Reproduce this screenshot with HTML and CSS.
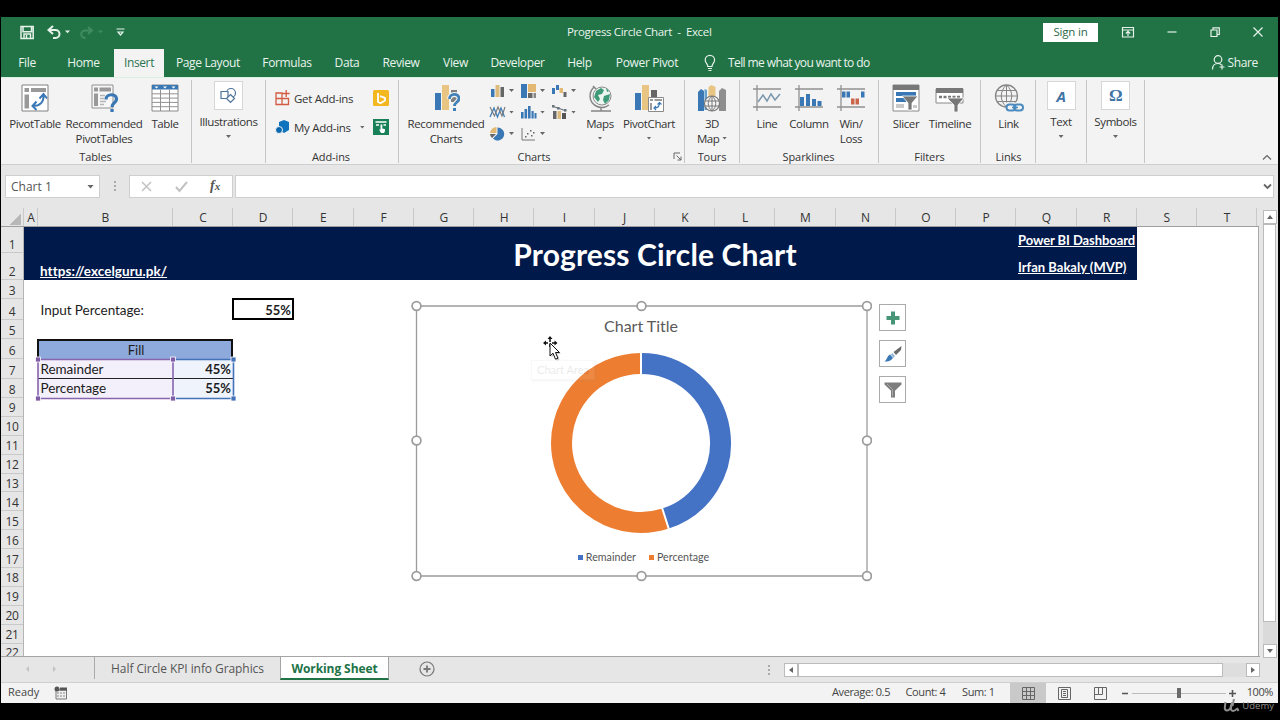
FILE: index.html
```html
<!DOCTYPE html>
<html lang="en">
<head>
<meta charset="utf-8">
<title>Progress Circle Chart - Excel</title>
<link rel="stylesheet" href="styles.css">
</head>
<body>
<div class="app">
  <header class="titlebar">
    <div class="quick">
      <svg width="110" height="20" viewBox="0 0 110 20" fill="none" stroke="#e6f2ea" stroke-width="1.500">
        <path d="M2 4.500h12.200v12H2z M4 4.500v5.200h8.500v-5.200 M5 16v-4h6.500v4 M7.500 13v3"/>
        <path d="M34 4l-4.500 4 4.500 4M30 8h6.500a4 4 0 0 1 0 8h-2.500" stroke-width="2"/>
        <path d="M46 8.500h5l-2.500 2.800z" fill="#e6f2ea" stroke="none"/>
        <path d="M69 5l4 3.500-4 3.500M73 8.500h-6.500a4 3.500 0 0 0 0 7.500" stroke="#3f8c60" stroke-width="2"/>
        <path d="M79 8.500h5l-2.500 2.800z" fill="#3f8c60" stroke="none"/>
        <path d="M97.500 7h8M99 10l2.500 3 2.500-3z" stroke-width="1.200"/>
      </svg>
    </div>
    <div class="doc-title">Progress Circle Chart&nbsp; -&nbsp; Excel</div>
    <div class="window-tools">
      <span class="signin">Sign in</span>
      <svg width="160" height="20" viewBox="0 0 160 20" fill="none" stroke="#e6f2ea" stroke-width="1.200">
        <path d="M6.500 5.500h11v9.500h-11zM6.500 8h11M12 14V9.500M9.800 11.500L12 9.300l2.200 2.200"/>
        <path d="M51.500 10h9"/>
        <path d="M95 8h6v6.500h-6zM97 8V5.800h6.300v6.700h-2"/>
        <path d="M137.500 5.500l9 9M146.500 5.500l-9 9"/>
      </svg>
    </div>
  </header>

  <nav class="tabs">
    <span class="tab t-file">File</span><span class="tab t-home">Home</span><span class="tab t-insert active">Insert</span><span class="tab t-page">Page Layout</span><span class="tab t-form">Formulas</span><span class="tab t-data">Data</span><span class="tab t-review">Review</span><span class="tab t-view">View</span><span class="tab t-dev">Developer</span><span class="tab t-help">Help</span><span class="tab t-power">Power Pivot</span>
    <svg class="bulb" width="14" height="18" viewBox="0 0 14 18" fill="none" stroke="#e6f2ea" stroke-width="1.200"><path d="M4.800 12.500C4.800 9.800 2.200 9 2.200 6a4.700 4.700 0 0 1 9.400 0c0 3-2.600 3.800-2.600 6.500zM5 14.500h4M5.500 16.500h3"/></svg>
    <span class="tell">Tell me what you want to do</span>
    <span class="share"><svg width="15" height="17" viewBox="0 0 15 17" fill="none" stroke="#e6f2ea" stroke-width="1.200"><circle cx="8" cy="5.500" r="3.800"/><path d="M2.500 15.500c0-4 2-6 5.500-6 1.500 0 2.500.5 3.300 1.200M9.500 13h5M12 10.500v5"/></svg>Share</span>
  </nav>

  <section class="ribbon">
    <div class="group g-tables">
      <div class="tools">
        <div class="btn w62">
          <svg width="28" height="28" viewBox="0 0 28 28"><path d="M1 1h26v26H1z" fill="#fff" stroke="#808080"/><path d="M3.500 4h4.500v4h-4.500zM10 4h15v4H10zM3.500 10.500h4.500v14h-4.500z" fill="#999"/><path d="M12 22c7 0 11-4 10.500-11M18.500 14.500l4-4.500 3.500 4.500M15.500 17.500L11.500 22l4 4" fill="none" stroke="#3a78b5" stroke-width="2"/></svg>
          <span>PivotTable</span></div>
        <div class="btn w76">
          <svg width="28" height="28" viewBox="0 0 28 28"><path d="M2 1h21v23H2z" fill="#f7f7f7" stroke="#909090"/><path d="M4 3.500h4v4H4zM9.500 3.500H21v4H9.500zM4 9.500h4V22H4z" fill="#999"/><path d="M10 11.500h5M10 14.500h4M10 17.500h6M10 20.500h4" stroke="#b5b5b5" stroke-width="1.500"/><path d="M16 15.500c0-6.500 10.500-6 10.500-.5 0 4-4.500 3.500-4.500 8" fill="none" stroke="#3a78b5" stroke-width="3.200"/><path d="M20.400 25h3.300v3h-3.300z" fill="#3a78b5"/></svg>
          <span>Recommended<br>PivotTables</span></div>
        <div class="btn w46">
          <svg width="28" height="28" viewBox="0 0 28 28"><path d="M1 1h26v26H1z" fill="#fff" stroke="#8a8a8a"/><path d="M1 1h26v4.500H1z" fill="#3a78b5"/><path d="M9.500 5.500V27M18.500 5.500V27M1 9.800h26M1 14.100h26M1 18.400h26M1 22.700h26" stroke="#929292"/><path d="M3.500 2.500h4l-2 2zM12 2.500h4l-2 2zM20.500 2.500h4l-2 2z" fill="#fff"/></svg>
          <span>Table</span></div>
      </div>
      <div class="group-name">Tables</div>
    </div>

    <div class="group g-illus">
      <div class="gallery"><i><svg width="20" height="20" viewBox="0 0 20 20" fill="#fff" stroke="#4d7399" stroke-width="1.200"><circle cx="12" cy="7" r="4.500"/><path d="M2 5.500h7v7H2z"/><path d="M11.500 8.500l4 4-4 4-4-4z"/></svg></i><span>Illustrations</span><b class="caret"></b></div>
    </div>

    <div class="group g-addins">
      <div class="addins">
        <div class="row">
          <svg width="16" height="16" viewBox="0 0 16 16" fill="none" stroke="#d25b42" stroke-width="1.300"><path d="M1 3h6v11.500H1zM1 8.500h12.500v6H7M11.200 0v7M7.700 3.500h7"/></svg><span>Get Add-ins</span>
          <svg class="far" width="16" height="16" viewBox="0 0 16 16"><rect width="16" height="16" rx="1.500" fill="#f3b71f"/><path d="M5 3v9l2.500 1.200 4.500-2.700V8L7 6.200" fill="none" stroke="#fff" stroke-width="1.800"/></svg>
        </div>
        <div class="row">
          <svg width="16" height="16" viewBox="0 0 16 16"><path d="M4 3l5-2 5 2v8l-5 3-5-3z" fill="#0f74bd"/><circle cx="4" cy="11" r="3.500" fill="#0968b0" stroke="#f3f3f3"/></svg><span>My Add-ins</span><b class="caret"></b>
          <svg class="far" width="16" height="16" viewBox="0 0 16 16"><rect width="16" height="16" fill="#188158"/><path d="M2.500 3h11M3 6h3M10.500 6H13" fill="none" stroke="#fff" stroke-width="1.300"/><path d="M7.500 5.500h1.800v4l2.700.8v2L11 14H8l-2-3.500 1.500.3z" fill="#fff"/></svg>
        </div>
      </div>
      <div class="group-name">Add-ins</div>
    </div>

    <div class="group g-charts">
      <div class="tools">
        <div class="btn w80">
          <svg width="28" height="28" viewBox="0 0 28 28"><path d="M3 9h6v17H3z" fill="#3a78b5"/><path d="M10 1h7v25h-7z" fill="#e8c583"/><path d="M19 6h6v12h-6z" fill="#7f7f7f"/><path d="M17.500 15c0-6 9.500-6 9.500-.5 0 4-4.500 3.500-4.500 7.500" fill="none" stroke="#f3f3f3" stroke-width="5"/><path d="M17.500 15c0-6 9.500-6 9.500-.5 0 4-4.500 3.500-4.500 7.500" fill="none" stroke="#4180b8" stroke-width="2.800"/><path d="M21 24h3v3h-3z" fill="#4180b8"/></svg>
          <span>Recommended<br>Charts</span></div>
        <div class="minis">
          <div><svg width="17" height="16" viewBox="0 0 17 16"><path d="M2 6h3.500v8H2z" fill="#3a78b5"/><path d="M6.500 2h4v12h-4z" fill="#dcbb7d"/><path d="M11.500 4H15v10h-3.500z" fill="#666"/></svg><b class="caret"></b></div>
          <div><svg width="17" height="16" viewBox="0 0 17 16"><path d="M1 1h6v14H1z" fill="#3a78b5"/><path d="M8 1h8v8H8z" fill="#e3b873"/><path d="M8 10h4.500v5H8z" fill="#666"/><path d="M13.500 10H16v5h-2.500z" fill="#888"/></svg><b class="caret"></b></div>
          <div><svg width="17" height="16" viewBox="0 0 17 16"><path d="M1 5h3v6H1zM5 2h3v5H5z" fill="#3a78b5"/><path d="M8.500 5H12v5H8.500z" fill="#e3b873"/><path d="M12.500 9H15.500v5h-3z" fill="#666"/></svg><b class="caret"></b></div>
          <div><svg width="17" height="16" viewBox="0 0 17 16" fill="none"><path d="M1 13L5 4l3.500 9L12 4l3.500 9" stroke="#4180b8" stroke-width="1.300"/><path d="M1 3l4.500 9L9 3l4 9 3-9" stroke="#777" stroke-width="1.100"/></svg><b class="caret"></b></div>
          <div><svg width="17" height="16" viewBox="0 0 17 16"><path d="M1 8h2.600v6.500H1zM4.500 5h2.600v9.500H4.500zM8 2h2.600v12.500H8zM11.500 7h2.200v7.500h-2.200zM14.500 9h2v5.500h-2z" fill="#3a78b5"/></svg><b class="caret"></b></div>
          <div><svg width="17" height="16" viewBox="0 0 17 16"><path d="M2 7h3.500v8H2z" fill="#666"/><path d="M6.500 7H10v8H6.500z" fill="#dcbb7d"/><path d="M11 9h4v6h-4z" fill="#555"/><path d="M2 2.500l5 1.500 8 3" fill="none" stroke="#68737d" stroke-width="1.200"/><path d="M1 1h2.500v2.500H1zM6 3h2.500v2.500H6zM13 5h2.500v2.500H13z" fill="#68737d"/></svg><b class="caret"></b></div>
          <div><svg width="17" height="16" viewBox="0 0 17 16"><path d="M8.500 8V1.500a6.500 6.500 0 1 1-4.500 11z" fill="#3a78b5"/><path d="M7.500 7H1a6.500 6.500 0 0 1 6.500-6z" fill="#e3b873"/><path d="M7 8L3 12A6 6 0 0 1 1 8z" fill="#666"/></svg><b class="caret"></b></div>
          <div><svg width="17" height="16" viewBox="0 0 17 16"><path d="M2 2v12h13" fill="none" stroke="#777"/><path d="M5 10h1.500v1.500H5zM7 7h1.500v1.500H7zM10 4h1.500v1.500H10zM11 9h1.500v1.500H11zM13 6h1.500v1.500H13z" fill="#666"/></svg><b class="caret"></b></div>
        </div>
        <div class="btn w36">
          <svg width="28" height="28" viewBox="0 0 28 28"><circle cx="16" cy="12" r="9" fill="#eef6f2" stroke="#8a8a8a"/><path d="M10 7l5-3 3 2-2 4-4 1 2 4-2 3-4-5zM18 12l6-2-1 6-4 4-2-4zM20 4l3 3-2 1z" fill="#3f9a78"/><path d="M8 3C2 9 3 18 10 22c4 2 9 2 13-1M15 23v4M5 27h20M7 2l3 3" fill="none" stroke="#858585" stroke-width="1.500"/></svg>
          <span>Maps</span><b class="caret"></b></div>
        <div class="btn w62">
          <svg width="30" height="28" viewBox="0 0 30 28"><path d="M1 9h6v17H1z" fill="#3a78b5"/><path d="M8 1h7v25H8z" fill="#e8c583"/><path d="M17 6h6v8h-6z" fill="#666"/><path d="M14.500 13.500h15v14h-15z" fill="#fff" stroke="#8a8a8a"/><path d="M16 15h3v2h-3zM20.500 15H28v2h-7.500zM16 19h2v7h-2z" fill="#999"/><path d="M20.500 24c4 0 5-2 5-5M23.500 20.500l2-2 2 2M22 22l-2 2 2 2" fill="none" stroke="#3a78b5" stroke-width="1.200"/></svg>
          <span>PivotChart</span><b class="caret"></b></div>
      </div>
      <div class="group-name">Charts</div>
      <svg class="launcher" width="9" height="9" viewBox="0 0 9 9" fill="none" stroke="#666"><path d="M1 7V1h6M3.500 3.500L8 8M8 4.500V8H4.500"/></svg>
    </div>

    <div class="group g-tours">
      <div class="tools">
        <div class="btn w54">
          <svg width="28" height="28" viewBox="0 0 28 28"><path d="M0 8l3-3 3 2v20H0z" fill="#3a78b5"/><path d="M6.500 5l2.500 1v20H6.500z" fill="#62a0d0"/><path d="M10.500 3l3-2 4 2v20h-7z" fill="#e8c583"/><path d="M21 7l3-3 4 2v21h-7z" fill="#8e8e8e"/><circle cx="14" cy="19.500" r="7.500" fill="#f5f5f5" stroke="#777" stroke-width="1.200"/><path d="M7 17h14M7 22h14M14 12v15M14 12c-5 4-5 11 0 15M14 12c5 4 5 11 0 15" fill="none" stroke="#777"/></svg>
          <span>3D<br>Map <b class="caret"></b></span></div>
      </div>
      <div class="group-name">Tours</div>
    </div>

    <div class="group g-spark">
      <div class="tools">
        <div class="btn w40">
          <svg width="28" height="28" viewBox="0 0 28 28" fill="none"><path d="M0 5h28M0 23h28M4 1v26" stroke="#919191" stroke-width="1.300"/><path d="M5 18l5-7 4 6 4-7 4 6 5-6" stroke="#7a97ad" stroke-width="1.500"/></svg>
          <span>Line</span></div>
        <div class="btn w44">
          <svg width="28" height="28" viewBox="0 0 28 28"><path d="M0 5h28M0 23h28M4 1v26" stroke="#919191" stroke-width="1.300"/><path d="M5 13h4v9H5zM11 10h4v12h-4zM17 15h4v7h-4zM22.500 17h4v5h-4z" fill="#3a78b5"/></svg>
          <span>Column</span></div>
        <div class="btn w40">
          <svg width="28" height="28" viewBox="0 0 28 28"><path d="M0 5h28M0 23h28M4 1v26" stroke="#919191" stroke-width="1.300"/><path d="M5 7.500h3.500v6H5zM9.500 7.500H13v6H9.500zM24 7.500h3.500v6H24z" fill="#3a78b5"/><path d="M14 14.500h3.500v6H14zM18.500 14.500H22v6h-3.500z" fill="#cb6448"/></svg>
          <span>Win/<br>Loss</span></div>
      </div>
      <div class="group-name">Sparklines</div>
    </div>

    <div class="group g-filters">
      <div class="tools">
        <div class="btn w36">
          <svg width="28" height="28" viewBox="0 0 28 28"><path d="M1 1h26v26H1z" fill="#fff" stroke="#888"/><path d="M1 1h26v5H1z" fill="#777"/><path d="M4 8h20v4H4zM4 14h10v4H4z" fill="#3a78b5"/><path d="M4 20h8v4H4zM21 21h4v3h-4z" fill="#c9c9c9"/><path d="M10 12h16l-6 7v7h-4v-7z" fill="#777" stroke="#fff" stroke-width=".8"/></svg>
          <span>Slicer</span></div>
        <div class="btn w52">
          <svg width="30" height="28" viewBox="0 0 30 28"><path d="M1 5h27v14H1z" fill="#fff" stroke="#888"/><path d="M1 4h27v5H1z" fill="#777"/><path d="M4 13h21" stroke="#777" stroke-width="2.500" stroke-dasharray="3 1.500"/><path d="M12 14h17l-6 7v7h-4v-7z" fill="#777" stroke="#fff" stroke-width=".8"/></svg>
          <span>Timeline</span></div>
      </div>
      <div class="group-name">Filters</div>
    </div>

    <div class="group g-links">
      <div class="tools">
        <div class="btn w54">
          <svg width="30" height="28" viewBox="0 0 30 28" fill="none"><circle cx="12.500" cy="12" r="11" stroke="#858585" stroke-width="1.300"/><path d="M12.500 1v22M1.500 12h22M3.500 6.500h18M3.500 17.500h18M12.500 1c-7 6-7 16 0 22M12.500 1c7 6 7 16 0 22" stroke="#858585"/><path d="M12 18.500h18v9.500H12z" fill="#f3f3f3"/><rect x="12.500" y="20.500" width="9" height="6" rx="3" stroke="#4b8bbf" stroke-width="2"/><rect x="20" y="20.500" width="9" height="6" rx="3" stroke="#4b8bbf" stroke-width="2"/><path d="M18 23.500h6" stroke="#4b8bbf" stroke-width="1.500"/></svg>
          <span>Link</span></div>
      </div>
      <div class="group-name">Links</div>
    </div>

    <div class="group g-text">
      <div class="gallery"><i class="glyph slant">A</i><span>Text</span><b class="caret"></b></div>
    </div>
    <div class="group g-symbols">
      <div class="gallery"><i class="glyph">Ω</i><span>Symbols</span><b class="caret"></b></div>
    </div>
    <svg class="collapse" width="10" height="7" viewBox="0 0 10 7" fill="none" stroke="#666" stroke-width="1.200"><path d="M1 5.500l4-4 4 4"/></svg>
  </section>

  <section class="formula">
    <div class="namebox">Chart 1<b class="caret"></b></div>
    <div class="dots"></div>
    <div class="fx">
      <svg width="102" height="22" viewBox="0 0 102 22" fill="none" stroke="#c2c2c2" stroke-width="1.500"><path d="M12 6l9 9M21 6l-9 9"/><path d="M46 11l3.500 4L57 6" stroke-width="2"/></svg>
      <em>f<small>x</small></em>
    </div>
    <div class="input"><svg width="9" height="7" viewBox="0 0 9 7" fill="none" stroke="#666" stroke-width="1.800"><path d="M1 1.500L4.500 5 8 1.500"/></svg></div>
  </section>

  <section class="sheet">
    <div class="colheads">
      <span class="corner"></span><span>A</span><span>B</span><span>C</span><span>D</span><span>E</span><span>F</span><span>G</span><span>H</span><span>I</span><span>J</span><span>K</span><span>L</span><span>M</span><span>N</span><span>O</span><span>P</span><span>Q</span><span>R</span><span>S</span><span>T</span>
    </div>
    <div class="rowheads">
      <span>1</span><span>2</span><span>3</span><span>4</span><span>5</span><span>6</span><span>7</span><span>8</span><span>9</span><span>10</span><span>11</span><span>12</span><span>13</span><span>14</span><span>15</span><span>16</span><span>17</span><span>18</span><span>19</span><span>20</span><span>21</span><span>22</span>
    </div>
    <div class="cells">
      <div class="banner">
        <a class="site">https://excelguru.pk/</a>
        <h1>Progress Circle Chart</h1>
        <div class="links"><a class="l1">Power BI Dashboard</a><a class="l2">Irfan Bakaly (MVP)</a></div>
      </div>
      <div class="cell input-label">Input Percentage:</div>
      <div class="cell input-value">55%</div>
      <div class="cell fill-head">Fill</div>
      <div class="cell cat c7">Remainder</div>
      <div class="cell num n7">45%</div>
      <div class="cell cat c8">Percentage</div>
      <div class="cell num n8">55%</div>
      <svg class="ranges" width="204" height="48" viewBox="0 0 204 48"><path d="M4 3v40.500h135V4.500H4" fill="none" stroke="#8764ad" stroke-width="1.600"/><path d="M139 4.500h60.500v39H139" fill="none" stroke="#4472b8" stroke-width="1.600"/><g stroke="#fff" stroke-width=".8"><path d="M1.500 2h5v5h-5zM1.500 41h5v5h-5zM136.500 2h5v5h-5zM136.500 41h5v5h-5z" fill="#7e5ca6"/><path d="M197 2h5v5h-5zM197 41h5v5h-5z" fill="#4472b8"/></g></svg>

      <div class="chart">
        <div class="chart-title">Chart Title</div>
        <svg class="donut" width="182" height="182" viewBox="0 0 182 182" fill="none">
          <path d="M91 11.500A79.500 79.500 0 0 1 115.570 166.610" stroke="#4472c4" stroke-width="21"/>
          <path d="M115.570 166.610A79.500 79.500 0 1 1 91 11.500" stroke="#ed7d31" stroke-width="21"/>
          <path d="M91 0v23M111.700 154.700l7.400 23" stroke="#fff" stroke-width="2"/>
        </svg>
        <div class="legend"><i class="blue"></i><span>Remainder</span><i class="orange"></i><span>Percentage</span></div>
        <svg class="frame" width="462" height="282" viewBox="0 0 462 282" fill="#fff" stroke="#9c9c9c">
          <path d="M6.500 6h450.500v270H6.500z" fill="none" stroke-width="1.300"/>
          <g stroke-width="1.700"><circle cx="6.500" cy="6" r="4.400"/><circle cx="231.500" cy="6" r="4.400"/><circle cx="457" cy="6" r="4.400"/><circle cx="6.500" cy="140.500" r="4.400"/><circle cx="457" cy="140.500" r="4.400"/><circle cx="6.500" cy="276" r="4.400"/><circle cx="231.500" cy="276" r="4.400"/><circle cx="457" cy="276" r="4.400"/></g>
        </svg>
        <div class="hint">Chart Area</div>
        <svg class="pointer" width="22" height="26" viewBox="0 0 22 26"><path d="M8 0l2.500 3h-5zM1 7l3-2.500v5zM15.500 7l-3-2.500v5z" fill="#111"/><path d="M8 2v4M3 7h3M10 7h3M8 8v3" stroke="#111" stroke-width="1.500"/><path d="M9.500 8.500v13l3-2.800 2.500 6 2.500-1-2.500-5.700h4z" fill="#777" opacity=".35"/><path d="M8 7v13l3-2.800 2.500 6 2.500-1-2.500-5.700h4z" fill="#fff" stroke="#111"/></svg>
      </div>
      <div class="chart-buttons">
        <span><svg width="16" height="16" viewBox="0 0 16 16"><path d="M6 1.500h4V6h4.500v4H10v4.500H6V10H1.500V6H6z" fill="#459576"/></svg></span>
        <span><svg width="18" height="18" viewBox="0 0 18 18"><path d="M17.500 1l-8 6 2.500 3 5-5z" fill="#6b6b6b"/><path d="M8.500 8L11 11l-1.500 2-3-3.500z" fill="#9bbcd6"/><path d="M6 9.500l3 3.500c-2 3-5 3.500-8.500 3.500C3 15 3 11 6 9.500z" fill="#3a78b5"/></svg></span>
        <span><svg width="18" height="18" viewBox="0 0 18 18"><path d="M.500 1.500h17v2l-6.500 6.300V16.500H7V9.800L.500 3.500z" fill="#7d7d7d"/><path d="M3 3l5.500 5.500V15" fill="none" stroke="#aaa"/></svg></span>
      </div>
    </div>
    <div class="vscroll">
      <span class="arrow up"></span><span class="thumb"></span><span class="track"></span><span class="arrow down"></span>
    </div>
  </section>

  <section class="sheettabs">
    <span class="nav"><svg width="40" height="10" viewBox="0 0 40 10" fill="#c3c3c3"><path d="M7 2v6L4 5zM31 2v6l3-3z"/></svg></span>
    <span class="stab">Half Circle KPI info Graphics</span>
    <span class="stab on">Working Sheet</span>
    <svg class="plus" width="16" height="16" viewBox="0 0 16 16" fill="none" stroke="#777" stroke-width="1.200"><circle cx="8" cy="8" r="7"/><path d="M8 4.500v7M4.500 8h7" stroke-width="1.800"/></svg>
    <div class="dots"></div>
    <div class="hscroll"><span class="arrow left"></span><span class="bar"></span><span class="rest"></span><span class="arrow right"></span></div>
  </section>

  <footer class="status">
    <span class="ready">Ready</span>
    <svg class="macro" width="14" height="14" viewBox="0 0 14 14"><path d="M2 4h10.500v9H2z" fill="#eee" stroke="#777"/><path d="M6 1.500h7v3H6z" fill="#555"/><circle cx="3" cy="3" r="2.500" fill="#555"/><path d="M4 6v6M7 6v6M10 6v6" stroke="#888" stroke-dasharray="2 1"/></svg>
    <span class="stats"><span class="s1">Average: 0.5</span><span class="s2">Count: 4</span><span class="s3">Sum: 1</span></span>
    <span class="view on"><svg width="13" height="13" viewBox="0 0 13 13" fill="none" stroke="#666"><path d="M.500.500h12v12H.500zM4.500.500v12M8.500.500v12M.500 4.500h12M.500 8.500h12"/></svg></span>
    <span class="view"><svg width="13" height="13" viewBox="0 0 13 13" fill="none" stroke="#666"><path d="M.500.500h12v12H.500zM3.500 2.500h6v8h-6zM5 4.500h3M5 6.500h3M5 8.500h3"/></svg></span>
    <span class="view"><svg width="13" height="13" viewBox="0 0 13 13" fill="none" stroke="#666"><path d="M.500.500h12v12H.500zM4.500.500v7h-4M8.500.500v7h-4"/></svg></span>
    <svg class="zoomer" width="116" height="14" viewBox="0 0 116 14"><path d="M1 7.500h6M108 7.500h7M111.500 4v7" stroke="#555" stroke-width="1.600"/><path d="M11 7.500h94" stroke="#bbb"/><path d="M56 2h4v10h-4z" fill="#6a6a6a"/></svg>
    <span class="pct">100%</span>
  </footer>
</div>
<div class="watermark"><svg width="18" height="16" viewBox="0 0 18 16" fill="none" stroke="#8d8d8d" stroke-width="2"><path d="M2.500 4L1.800 9.500c-.3 4 4.200 4 5.700 0L9 4.500M9 4.500L8 10c-.5 4 4 3.500 6 .5M11 1L9.500 8M14 10l1.500 3"/></svg><span>Udemy</span></div>
</body>
</html>
```
FILE: styles.css
```css
* { box-sizing: border-box; }
body { margin: 0; width: 1280px; height: 720px; background: #000; overflow: hidden; padding: 17px 2px 0 1px; position: relative; font-family: "Open Sans", "Noto Sans", sans-serif; font-size: 12px; color: #333; }
svg { display: block; flex: none; }
.app { display: flex; flex-direction: column; width: 1277px; height: 686px; background: #e6e6e6; }
.caret { display: inline-block; width: 5px; height: 3px; background: #666; clip-path: polygon(0 0, 100% 0, 50% 100%); flex: none; }

.titlebar { height: 32px; background: #217346; color: #e9f4ed; display: grid; grid-template-columns: 566px 1fr auto; align-items: center; font-size: 11.5px; }
.quick { padding: 0 0 2px 18px; }
.doc-title { white-space: nowrap; letter-spacing: -.34px; padding-bottom: 4px; }
.window-tools { display: flex; align-items: center; gap: 18px; padding-right: 2px; }
.signin { width: 55px; height: 19px; line-height: 18px; background: #fff; color: #2d6a49; text-align: center; letter-spacing: -.2px; margin-bottom: 2px; }
.window-tools svg { margin-bottom: 3px; }

.tabs { height: 28px; background: #217346; color: #e9f4ed; display: flex; align-items: stretch; line-height: 28px; letter-spacing: -.36px; font-size: 12px; white-space: nowrap; }
.tab { text-align: center; flex: none; }
.t-file { width: 52px; } .t-home { width: 61px; } .t-insert { width: 50px; } .t-page { width: 88px; } .t-form { width: 70px; } .t-data { width: 50px; } .t-review { width: 58px; } .t-view { width: 51px; } .t-dev { width: 73px; } .t-help { width: 51px; } .t-power { width: 84px; }
.tab.active { background: #f3f3f3; color: #2d7552; }
.bulb { margin: 5px 11px 0 14px; }
.tell { letter-spacing: -.6px; }
.share { margin-left: auto; margin-right: 20px; display: flex; gap: 3px; }
.share svg { margin-top: 5px; }

.ribbon { height: 88px; background: #f3f3f3; border-top: 1px solid #dcefe3; border-bottom: 1px solid #cfcfcf; display: flex; position: relative; font-size: 11.5px; letter-spacing: -.4px; }
.group { height: 83px; margin-top: 2px; border-right: 1px solid #c6c6c6; display: flex; flex-direction: column; justify-content: space-between; flex: none; position: relative; white-space: nowrap; }
.g-tables { width: 191px; padding-left: 3px; } .g-illus { width: 74px; } .g-addins { width: 133px; } .g-charts { width: 286px; padding-left: 7px; } .g-tours { width: 55px; } .g-spark { width: 139px; padding-left: 7px; } .g-filters { width: 102px; padding-left: 9px; } .g-links { width: 55px; padding-left: 1px; } .g-text { width: 51px; } .g-symbols { width: 58px; }
.group-name { text-align: center; font-size: 11px; line-height: 13px; letter-spacing: -.1px; }
.g-tables .group-name { margin-left: -4px; }
.g-spark .group-name { margin-left: -8px; }
.g-addins .group-name { margin-left: -2px; }
.g-charts .group-name { margin-left: -22px; }
.g-filters .group-name { margin-left: -9px; }
.tools { display: flex; padding-top: 4px; }
.btn { display: flex; flex-direction: column; align-items: center; text-align: center; line-height: 15px; height: 62px; }
.btn > svg { height: 28px; }
.btn > span { margin-top: 3.5px; }
.btn > .caret { margin-top: 6px; }
.w36 { width: 36px; } .w40 { width: 40px; } .w44 { width: 44px; } .w46 { width: 46px; } .w52 { width: 52px; } .w54 { width: 54px; } .w62 { width: 62px; } .w76 { width: 76px; } .w80 { width: 80px; }
.btn .caret { vertical-align: 3px; }
.gallery { display: flex; flex-direction: column; align-items: center; padding-top: 1px; line-height: 15px; }
.gallery i { width: 29px; height: 29px; border: 1px solid #d7d7d7; background: #fff; display: grid; place-items: center; margin-bottom: 3.5px; }
.gallery .caret { margin-top: 6.5px; }
.glyph { font: bold 17px "Liberation Serif", serif; color: #4173a5; }
.slant { font: italic bold 15px "Open Sans", sans-serif; }
.addins { padding: 10px 9px 0 9px; display: flex; flex-direction: column; gap: 13px; }
.row { display: flex; align-items: center; height: 16px; letter-spacing: -.28px; }
.row span { margin-left: 3px; }
.row .caret { margin-left: 9px; }
.far { margin-left: auto; }
.minis { display: grid; grid-template-columns: repeat(3, 31px); grid-auto-rows: 21.5px; width: 96px; padding-left: 3px; margin-top: -1.5px; }
.minis div { display: flex; align-items: center; gap: 3px; height: 16px; }
.launcher { position: absolute; right: 2px; bottom: 2px; }
.collapse { margin-left: auto; margin-right: 6px; align-self: flex-end; margin-bottom: 3px; }

.formula { height: 43px; padding: 10px 4px 10px 4px; display: flex; color: #555; background: #e6e6e6; }
.namebox { width: 95px; background: #fff; border: 1px solid #cfcfcf; display: flex; align-items: center; justify-content: space-between; padding: 0 5px 0 5px; font-size: 12px; }
.namebox .caret { width: 7px; height: 4px; }
.dots { width: 2px; height: 11px; align-self: center; background: repeating-linear-gradient(#aaa 0 2px, transparent 2px 4px); }
.formula .dots { margin: 0 13px 0 14px; }
.fx { width: 104px; background: #fff; border: 1px solid #cfcfcf; display: flex; position: relative; }
.fx em { position: absolute; left: 80px; top: -1px; font: italic bold 14px/22px "Liberation Serif", serif; color: #555; }
.fx small { font-size: 11px; }
.input { margin-left: 2px; flex: 1; background: #fff; border: 1px solid #cfcfcf; display: flex; align-items: center; justify-content: flex-end; padding-right: 1px; }

.sheet { height: 448px; display: grid; grid-template-columns: 23px 1235px 1fr; grid-template-rows: 19px 429px; font-size: 12px; }
.colheads { grid-column: 1 / 3; display: grid; grid-template-columns: 23px 14px 135px 60px repeat(17, 60.25px); border-bottom: 1px solid #9e9e9e; line-height: 20px; overflow: hidden; text-align: center; }
.colheads span { border-right: 1px solid #c9c9c9; padding-left: 1px; }
.corner { background: linear-gradient(135deg, transparent 50%, #b8b8b8 50%) 9px 6px / 11px 11px no-repeat; }
.rowheads { grid-column: 1; display: grid; grid-template-rows: 26px 27px 19px 21px 19px 20px 20px 19px repeat(14, 18.9px); height: 429px; overflow: hidden; border-right: 1px solid #b5b5b5; text-align: center; font-size: 12px; letter-spacing: -.3px; }
.rowheads span { border-bottom: 1px solid #c9c9c9; display: flex; align-items: flex-end; justify-content: center; line-height: 14.5px; }
.rowheads span:last-child { align-items: flex-start; padding-top: 2px; }
.cells { grid-column: 2; background: #fff; border-right: 1px solid #aaa; position: relative; display: grid; grid-template-columns: 14px 135px 60px 60px 1fr; grid-template-rows: 53px 19px 21px 19px 20px 20px 19px; align-content: start; font-family: Lato, sans-serif; font-size: 13.5px; color: #1c1c1c; }
.banner { grid-column: 1 / -1; width: 1113px; background: #00194b; color: #fff; display: grid; grid-template-columns: 1fr auto 1fr; }
.banner a { font-weight: bold; text-decoration: underline; white-space: nowrap; }
.banner h1 { margin: 0; font-size: 30px; line-height: 54px; letter-spacing: .15px; margin-left: 149px; white-space: nowrap; }
.site { align-self: end; padding-left: 16px; line-height: 19px; letter-spacing: .05px; }
.links { justify-self: end; width: 119px; display: flex; flex-direction: column; justify-content: space-between; line-height: 18px; padding: 4px 0 5px; font-size: 13px; letter-spacing: -.08px; }
.l2 { letter-spacing: 0; }
.cell { white-space: nowrap; line-height: 20px; padding: 0 2px 0 2.5px; }
.input-label { grid-area: 3 / 2; line-height: 22px; letter-spacing: -.04px; }
.input-value { grid-area: 3 / 4; border: 2px solid #000; margin: -1px -1px 0 -1px; text-align: right; font-weight: bold; line-height: 20px; padding: 0 1px; font-size: 13px; }
.fill-head { grid-area: 5 / 2 / 6 / 4; background: #8ea9db; border: 2px solid #111; border-bottom: 0; text-align: center; margin: 0 0 0 -1px; line-height: 19px; font-size: 13px; padding-left: 4px; }
.cat { background: #f4f0fb; grid-column: 2; letter-spacing: -.05px; }
.num { background: #eef3fc; grid-column: 3; text-align: right; font-weight: bold; font-size: 13px; }
.c7, .n7 { grid-row: 6; border-bottom: 1px solid #222; } .c8, .n8 { grid-row: 7; line-height: 19px; }
.ranges { position: absolute; left: 10px; top: 128px; }
.chart { position: absolute; left: 386px; top: 73px; width: 462px; height: 282px; background: #fff; display: flex; flex-direction: column; align-items: center; }
.chart-title { color: #595959; font-size: 16px; line-height: 22px; margin-top: 15px; }
.donut { margin-top: 14.5px; }
.legend { display: flex; align-items: center; font-size: 10.7px; color: #555; line-height: 14px; margin-top: 16.5px; margin-left: 5px; }
.legend i { width: 5px; height: 5px; margin-right: 3px; }
.legend span + i { margin-left: 13px; }
.blue { background: #4472c4; } .orange { background: #ed7d31; }
.frame { position: absolute; left: 0; top: 0; }
.hint { position: absolute; left: 121px; top: 60px; width: 64px; height: 20px; border: 1px solid #bbb; background: #fff; text-align: center; font-size: 11px; line-height: 18px; opacity: .09; box-shadow: 1px 1px 2px #999; }
.pointer { position: absolute; left: 132px; top: 36px; }
.chart-buttons { position: absolute; left: 855px; top: 77px; display: flex; flex-direction: column; gap: 9px; }
.chart-buttons span { width: 27px; height: 27px; border: 1px solid #ababab; background: #fff; display: grid; place-items: center; }
.vscroll { grid-column: 3; grid-row: 1 / 3; display: flex; flex-direction: column; padding: 2px 1px 0 4px; margin-bottom: -2px; position: relative; }
.arrow { width: 14px; height: 14px; background: #fff; border: 1px solid #bbb; display: grid; place-items: center; flex: none; }
.arrow::before { content: ""; width: 6px; height: 4px; background: #666; clip-path: polygon(0 100%, 100% 100%, 50% 0); }
.down::before { clip-path: polygon(0 0, 100% 0, 50% 100%); }
.thumb { height: 398px; width: 13px; background: #fff; border: 1px solid #bbb; }
.track { flex: 1; background: #dadada; }

.sheettabs { height: 27px; border-bottom: 1px solid #cfcfcf; display: flex; align-items: flex-start; background: linear-gradient(#a5a5a5, #a5a5a5) 0 0 / 1259px 1px no-repeat #e6e6e6; padding-top: 1px; color: #555; font-size: 12px; white-space: nowrap; }
.nav { width: 94px; height: 22px; border-right: 1px solid #aaa; padding: 7px 0 0 21px; }
.stab { width: 185px; text-align: center; line-height: 23px; letter-spacing: -.08px; }
.stab.on { width: 109px; background: #fff; color: #217346; font-weight: bold; border: solid #a5a5a5; border-width: 0 1px; border-bottom: 2px solid #217346; height: 23px; }
.plus { margin: 4px 0 0 30px; }
.sheettabs .dots { margin-left: 333px; align-self: auto; margin-top: 8px; height: 10px; }
.hscroll { display: flex; margin: 6px 18px 0 auto; width: 476px; }
.left::before, .right::before { width: 4px; height: 6px; clip-path: polygon(100% 0, 100% 100%, 0 50%); }
.right::before { clip-path: polygon(0 0, 100% 50%, 0 100%); }
.bar { width: 425px; height: 14px; background: #fff; border: 1px solid #bbb; }
.rest { flex: 1; background: #dedede; }

.status { height: 20px; background: #f3f3f3; display: flex; align-items: center; font-size: 11px; line-height: 18px; color: #444; white-space: nowrap; }
.status > span:not(.view) { margin-top: -2px; }
.ready { width: 53px; padding-left: 7px; }
.status .stats { margin-left: auto; display: flex; letter-spacing: -.38px; }
.s1 { width: 73.5px; } .s2 { width: 56.5px; } .s3 { width: 48px; }
.view { width: 36px; height: 20px; display: grid; place-items: center; }
.view.on { background: #c9c9c9; }
.zoomer { margin-left: 3px; }
.pct { width: 41px; text-align: right; padding-right: 5px; letter-spacing: -.4px; }
.watermark { position: absolute; right: 6px; bottom: 6px; display: flex; align-items: center; gap: 1px; color: #8d8d8d; font-size: 9.5px; line-height: 14px; }
```
